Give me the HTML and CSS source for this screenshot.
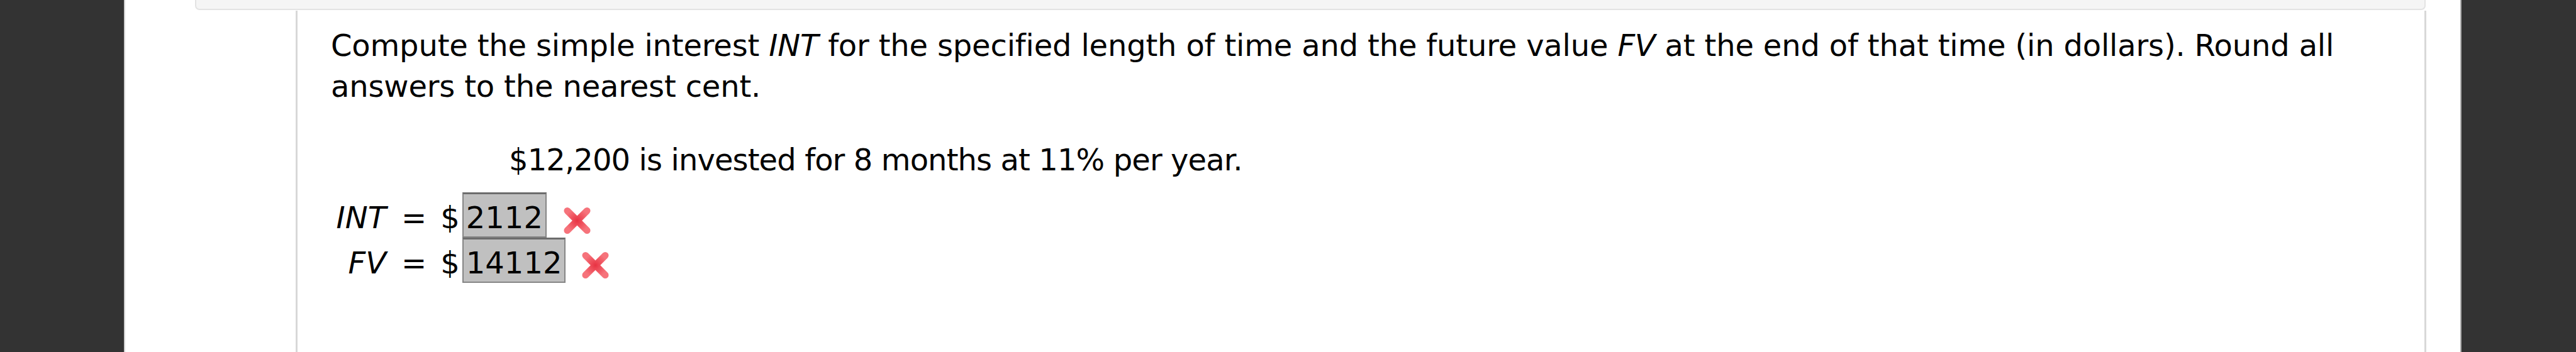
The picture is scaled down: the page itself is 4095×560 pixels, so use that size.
FILE: index.html
```html
<!DOCTYPE html>
<html lang="en">
<head>
<meta charset="utf-8">
<title>Simple interest</title>
<link rel="stylesheet" href="styles.css">
</head>
<body>
<div class="page">
  <div class="topbar"></div>
  <div class="panel">
    <p class="intro">Compute the simple interest <i>INT</i> for the specified length of time and the future value <i>FV</i> at the end of that time (in dollars). Round all answers to the nearest cent.</p>
    <p class="given">$12,200 is invested for 8 months at 11% per year.</p>
    <div class="answers">
      <div class="row">
        <span class="label"><i>INT</i></span>
        <span class="eq">=</span>
        <span class="cur">$</span>
        <span class="box">2112</span>
        <svg class="wrong" viewBox="0 0 48 48" width="48" height="48" aria-label="incorrect">
          <defs>
            <radialGradient id="xg1" cx="50%" cy="50%" r="60%">
              <stop offset="0" stop-color="#e83242"/>
              <stop offset="1" stop-color="#f6737b"/>
            </radialGradient>
          </defs>
          <path d="M8 8 L40 40 M40 8 L8 40" stroke="url(#xg1)" stroke-width="11" stroke-linecap="round" fill="none"/>
        </svg>
      </div>
      <div class="row">
        <span class="label"><i>FV</i></span>
        <span class="eq">=</span>
        <span class="cur">$</span>
        <span class="box">14112</span>
        <svg class="wrong wrong2" viewBox="0 0 48 48" width="48" height="48" aria-label="incorrect">
          <path d="M8 8 L40 40 M40 8 L8 40" stroke="url(#xg1)" stroke-width="11" stroke-linecap="round" fill="none"/>
        </svg>
      </div>
    </div>
  </div>
</div>
</body>
</html>
```

FILE: styles.css
```css
html, body {
  margin: 0;
  padding: 0;
  background: #333333;
  height: 560px;
  overflow: hidden;
}

.page {
  margin-left: 197px;
  width: 3716px;
  height: 560px;
  box-sizing: border-box;
  background: #ffffff;
  border-left: 2px solid #d0d0d0;
  border-right: 2px solid #a8a8a8;
  font-family: "DejaVu Sans", Verdana, sans-serif;
  font-size: 48px;
  color: #000;
}

.topbar {
  margin-left: 111px;
  width: 3546px;
  height: 16px;
  box-sizing: border-box;
  background: #f5f5f5;
  border: 2px solid #e3e3e3;
  border-top: none;
  border-radius: 0 0 7px 7px;
}

.panel {
  margin-top: 1px;
  margin-left: 271px;
  width: 3387px;
  height: 543px;
  box-sizing: border-box;
  border-left: 3px solid #d8d8d8;
  border-right: 3px solid #d8d8d8;
  padding: 23px 60px 0 53px;
}

.intro {
  margin: 0;
  line-height: 65px;
  letter-spacing: -0.18px;
}

.given {
  margin: 52px 0 0 283px;
  line-height: 65px;
  letter-spacing: -0.9px;
}

.answers {
  margin-top: 19px;
  display: flex;
  flex-direction: column;
}

.row {
  display: flex;
  align-items: baseline;
}

.label {
  width: 88px;
  text-align: right;
}

.eq {
  margin-left: 24px;
}

.cur {
  margin-left: 22px;
}

.box {
  margin-left: 4px;
  height: 72px;
  box-sizing: border-box;
  padding: 7px 4px 0 4px;
  line-height: 60px;
  background: #c0c0c0;
  border: 2px solid #858585;
  border-top: 3px solid #6c6c6c;
}

.wrong {
  align-self: flex-start;
  margin-top: 21px;
  margin-left: 25px;
  width: 47px;
  height: 48px;
}

.wrong2 {
  margin-top: 20px;
  margin-left: 24px;
}
```
